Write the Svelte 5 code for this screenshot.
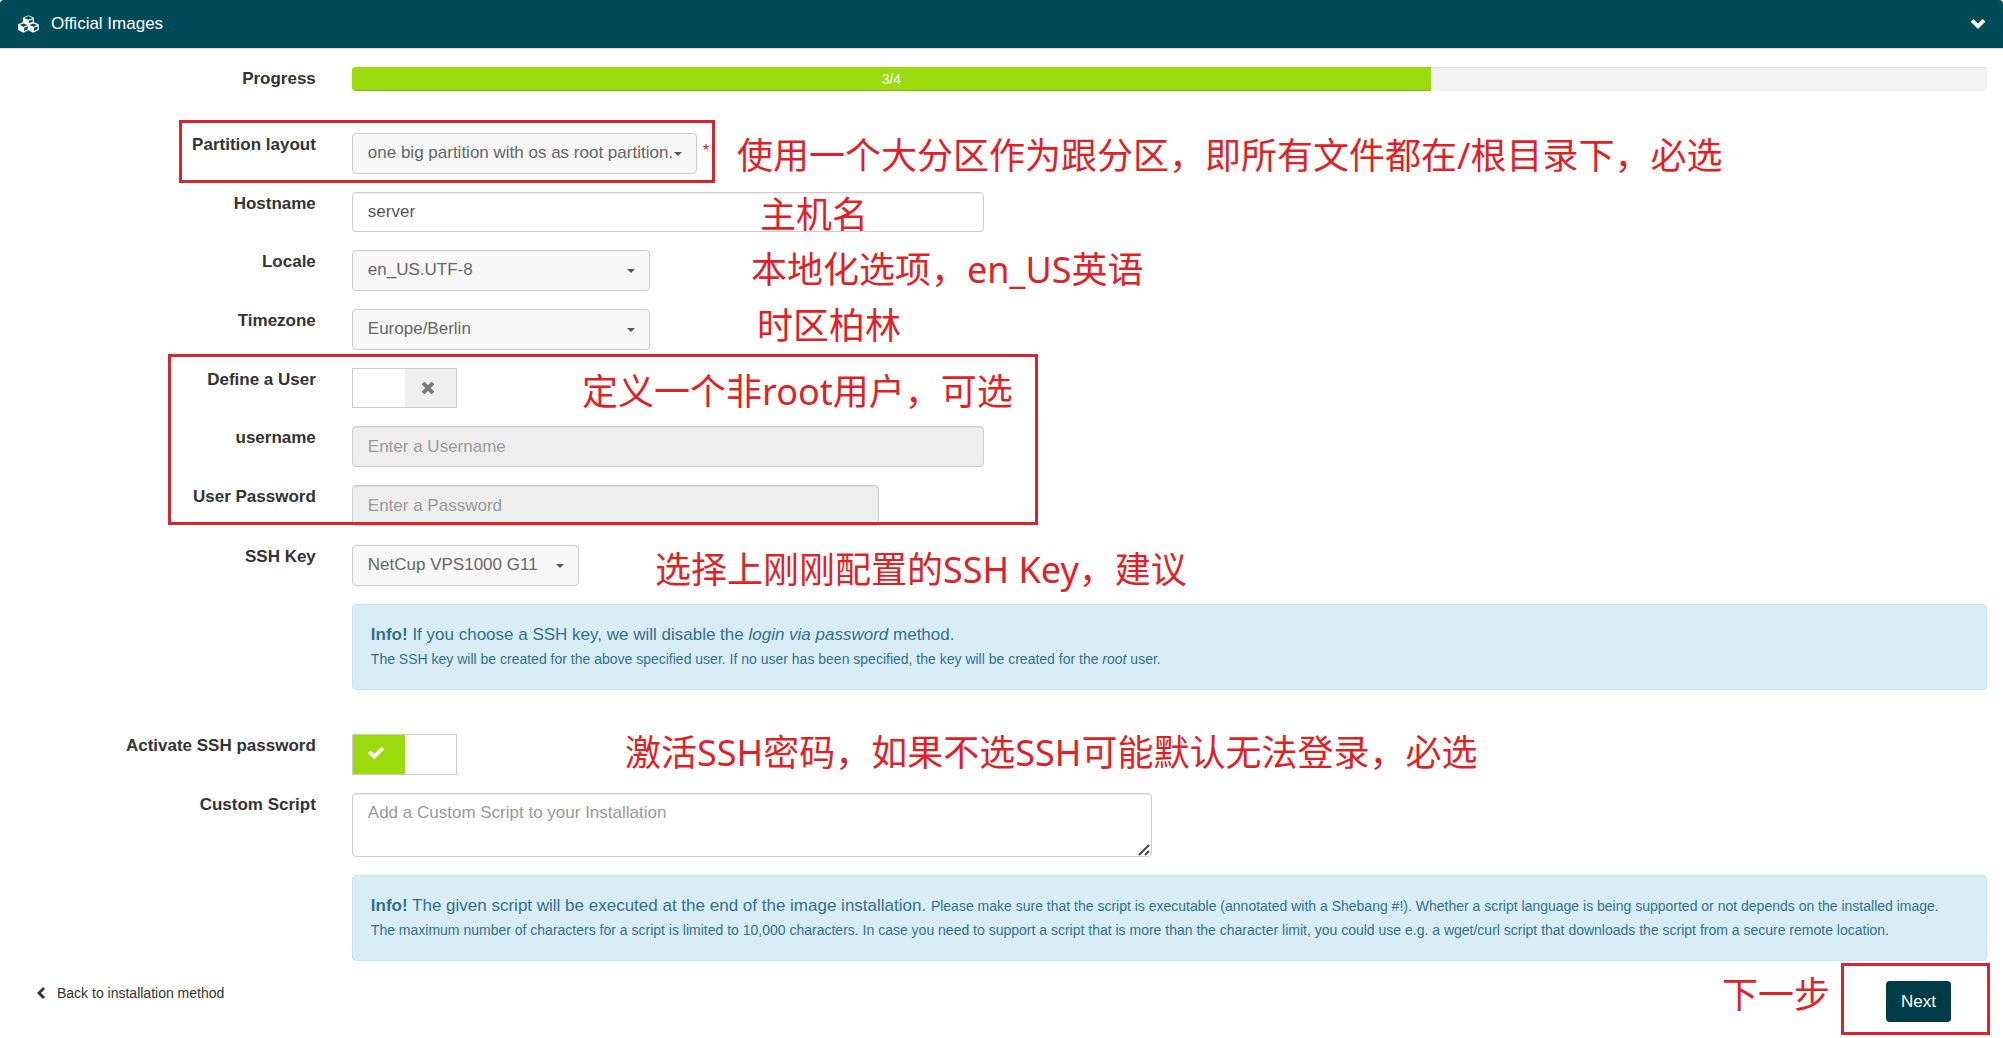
<script>
  let userDefined = $state(false);
  let sshPassword = $state(true);
  let hostname = $state('server');
  const step = 3;
  const steps = 4;
  const fill = 66;
</script>

{#snippet caret()}
  <svg class="caret" viewBox="0 0 8 4" aria-hidden="true"><path d="M0 0h8L4 4z" /></svg>
{/snippet}

{#snippet marks()}
  <svg class="on" viewBox="121 334 1550 1188" aria-hidden="true"><path d="M1671 566q0 40-28 68l-724 724-136 136q-28 28-68 28t-68-28l-136-136-362-362q-28-28-28-68t28-68l136-136q28-28 68-28t68 28l294 295 656-657q28-28 68-28t68 28l136 136q28 28 28 68z" /></svg>
  <svg class="off" viewBox="302 366 1188 1188" aria-hidden="true"><path d="M1490 1322q0 40-28 68l-136 136q-28 28-68 28t-68-28l-294-294-294 294q-28 28-68 28t-68-28l-136-136q-28-28-28-68t28-68l294-294-294-294q-28-28-28-68t28-68l136-136q28-28 68-28t68 28l294 294 294-294q28-28 68-28t68 28l136 136q28 28 28 68t-28 68l-294 294 294 294q28 28 28 68z" /></svg>
{/snippet}

<div class="page">
  <header>
    <svg class="cubes" viewBox="0 0 2304 1792" aria-hidden="true"><path d="M640 1632l384-192v-314l-384 164v342zM576 1178l404-173-404-173-404 173zM1664 1632l384-192v-314l-384 164v342zM1600 1178l404-173-404-173-404 173zM1152 823l384-165v-266l-384 164v267zM1088 446l441-189-441-189-441 189zM2176 1024v416q0 36-19 67t-52 47l-448 224q-25 14-57 14t-57-14l-448-224q-4-2-7-4-2 2-7 4l-448 224q-25 14-57 14t-57-14l-448-224q-33-16-52-47t-19-67v-416q0-38 21.500-70t56.500-48l434-186v-400q0-38 21.500-70t56.500-48l448-192q23-10 50-10t50 10l448 192q35 16 56.500 48t21.500 70v400l434 186q36 16 57 48t21 70z" /></svg>
    <h1>Official Images</h1>
    <button class="collapse" type="button" aria-label="Collapse">
      <svg viewBox="0 0 16 11" aria-hidden="true"><path d="M3 0L8 5L13 0L16 3L8 11L0 3z" /></svg>
    </button>
  </header>

  <form onsubmit={(e) => e.preventDefault()}>
    <div class="row progress-row">
      <span class="name" id="progress-label">Progress</span>
      <div class="field">
        <div class="progress" role="progressbar" aria-labelledby="progress-label" aria-valuemin="0" aria-valuemax={steps} aria-valuenow={step}>
          <div class="bar" style="width: {fill}%">{step}/{steps}</div>
        </div>
      </div>
    </div>

    <div class="row">
      <label class="name" for="layout">Partition layout</label>
      <div class="field">
        <span class="select wide">
          <select id="layout"><option>one big partition with os as root partition.</option></select>
          {@render caret()}
        </span>
        <span class="required">*</span>
      </div>
    </div>

    <div class="row">
      <label class="name" for="hostname">Hostname</label>
      <div class="field"><input class="text short" id="hostname" type="text" bind:value={hostname} /></div>
    </div>

    <div class="row">
      <label class="name" for="locale">Locale</label>
      <div class="field">
        <span class="select medium">
          <select id="locale"><option>en_US.UTF-8</option></select>
          {@render caret()}
        </span>
      </div>
    </div>

    <div class="row">
      <label class="name" for="timezone">Timezone</label>
      <div class="field">
        <span class="select medium">
          <select id="timezone"><option>Europe/Berlin</option></select>
          {@render caret()}
        </span>
      </div>
    </div>

    <div class="row">
      <label class="name" for="define">Define a User</label>
      <div class="field">
        <span class="switch short">
          <input id="define" type="checkbox" bind:checked={userDefined} />
          {@render marks()}
        </span>
      </div>
    </div>

    <div class="row">
      <label class="name" for="username">username</label>
      <div class="field"><input class="text" id="username" type="text" placeholder="Enter a Username" disabled={!userDefined} /></div>
    </div>

    <div class="row">
      <label class="name" for="password">User Password</label>
      <div class="field"><input class="text secret" id="password" type="password" placeholder="Enter a Password" disabled={!userDefined} /></div>
    </div>

    <div class="row">
      <label class="name" for="key">SSH Key</label>
      <div class="field">
        <span class="select small">
          <select id="key"><option>NetCup VPS1000 G11</option></select>
          {@render caret()}
        </span>
      </div>
    </div>

    <div class="row key-info">
      <div class="alert">
        <p><strong>Info!</strong> If you choose a SSH key, we will disable the <em>login via password</em> method.</p>
        <p><small>The SSH key will be created for the above specified user. If no user has been specified, the key will be created for the <em>root</em> user.</small></p>
      </div>
    </div>

    <div class="row">
      <label class="name" for="activate">Activate SSH password</label>
      <div class="field">
        <span class="switch">
          <input id="activate" type="checkbox" bind:checked={sshPassword} />
          {@render marks()}
        </span>
      </div>
    </div>

    <div class="row">
      <label class="name" for="script">Custom Script</label>
      <div class="field">
        <div class="area">
          <textarea id="script" placeholder="Add a Custom Script to your Installation"></textarea>
          <svg class="grip" viewBox="0 0 12 12" aria-hidden="true"><path d="M1 11L11 1M7 11L11 7" /></svg>
        </div>
      </div>
    </div>

    <div class="row">
      <div class="alert">
        <p><strong>Info!</strong> The given script will be executed at the end of the image installation. <small>Please make sure that the script is executable (annotated with a Shebang #!). Whether a script language is being supported or not depends on the installed image.</small></p>
        <p><small>The maximum number of characters for a script is limited to 10,000 characters. In case you need to support a script that is more than the character limit, you could use e.g. a wget/curl script that downloads the script from a secure remote location.</small></p>
      </div>
    </div>

    <footer>
      <a href="#method">
        <svg viewBox="0 0 8 12" aria-hidden="true"><path d="M6 0L8 2L4 6L8 10L6 12L0 6z" /></svg>
        Back to installation method
      </a>
      <button class="next" type="submit">Next</button>
    </footer>
  </form>

  <div class="box partition"></div>
  <div class="box user"></div>
  <div class="box forward"></div>
  <span class="note n-partition">使用一个大分区作为跟分区，即所有文件都在/根目录下，必选</span>
  <span class="note n-host">主机名</span>
  <span class="note n-locale">本地化选项，en_US英语</span>
  <span class="note n-zone">时区柏林</span>
  <span class="note n-user">定义一个非root用户，可选</span>
  <span class="note n-key">选择上刚刚配置的SSH Key，建议</span>
  <span class="note n-activate">激活SSH密码，如果不选SSH可能默认无法登录，必选</span>
  <span class="note n-next">下一步</span>
</div>

<style>
  :global(body) {
    background: #fff;
  }
  .page {
    position: relative;
    font-family: 'Liberation Sans', Arial, sans-serif;
    font-size: 17px;
    line-height: 24px;
    color: #333;
  }
  .page * {
    box-sizing: border-box;
  }
  header {
    display: flex;
    align-items: center;
    gap: 11px;
    height: 48px;
    padding: 0 17px 1px 18px;
    background: #004b5a;
    color: #fff;
    border-radius: 4px 4px 0 0;
    box-shadow: 0 1px 0 #d5dfe2;
  }
  .cubes {
    width: 22px;
    height: 18px;
    fill: currentColor;
  }
  h1 {
    margin: 0;
    flex: 1;
    font-size: 17px;
    font-weight: 400;
  }
  .collapse {
    display: flex;
    padding: 0;
    border: 0;
    background: none;
    color: #fff;
  }
  .collapse svg {
    width: 16px;
    height: 10px;
    fill: currentColor;
  }
  form {
    padding-top: 19px;
  }
  .row {
    display: flex;
    margin-bottom: 18px;
  }
  .progress-row {
    margin-bottom: 42px;
  }
  .name {
    width: 16.6667%;
    padding-right: 18px;
    text-align: right;
    font-weight: 700;
  }
  .field {
    flex: 1;
    display: flex;
    padding: 0 16px 0 18px;
  }
  .progress {
    flex: 1;
    height: 24px;
    border-radius: 4px;
    overflow: hidden;
    background: #f4f4f4;
    box-shadow: inset 0 1px 2px #0000001a;
  }
  .bar {
    height: 100%;
    background: #9bda0c;
    box-shadow: inset 0 -1px 0 #00000026;
    color: #fff;
    font-size: 14px;
    text-align: center;
  }
  .select {
    position: relative;
  }
  select,
  .text,
  textarea {
    width: 100%;
    height: 41px;
    padding: 0 15px;
    border: 1px solid #ccc;
    border-radius: 4px;
    font: inherit;
    color: #555;
    background: #fff;
    box-shadow: inset 0 1px 1px #00000013;
  }
  select {
    display: block;
    appearance: none;
    padding: 0 15px 1px;
    background: #f7f7f7;
    color: #666;
    box-shadow: none;
  }
  .wide {
    width: 345px;
  }
  .medium {
    width: 298px;
  }
  .small {
    width: 227px;
  }
  .caret {
    position: absolute;
    right: 15px;
    top: 19px;
    width: 8px;
    height: 4px;
    fill: #555;
    pointer-events: none;
  }
  .required {
    padding: 6px 0 0 6px;
    font-size: 17px;
    color: #d22;
  }
  .text {
    width: 632px;
  }
  .text.short {
    height: 40px;
  }
  .text.secret {
    width: 527px;
    margin-bottom: 1px;
  }
  .text:disabled {
    background: #eee;
  }
  ::placeholder {
    color: #999;
    opacity: 1;
  }
  .area {
    position: relative;
    width: 800px;
  }
  textarea {
    display: block;
    height: 64px;
    padding: 7px 15px;
    resize: none;
  }
  .grip {
    position: absolute;
    right: 2px;
    bottom: 1px;
    width: 12px;
    height: 12px;
    fill: none;
    stroke: #444;
    stroke-width: 2;
    pointer-events: none;
  }
  .switch {
    position: relative;
    width: 105px;
    height: 41px;
  }
  .switch.short {
    height: 40px;
  }
  .switch input {
    appearance: none;
    display: block;
    width: 100%;
    height: 100%;
    margin: 0;
    border: 1px solid #ccc;
    background: linear-gradient(90deg, #fff 52px, #eee 52px);
  }
  .switch input:checked {
    background: linear-gradient(90deg, #9bda0c 52px, #fff 52px);
  }
  .on,
  .off {
    position: absolute;
    pointer-events: none;
  }
  .on {
    display: none;
    left: 16px;
    top: 13px;
    width: 16px;
    height: 12px;
    fill: #fff;
  }
  .off {
    right: 23px;
    top: 14px;
    width: 12px;
    height: 12px;
    fill: #777;
  }
  input:checked ~ .on {
    display: block;
  }
  input:checked ~ .off {
    display: none;
  }
  .alert {
    flex: 1;
    margin: 0 16px 0 calc(16.6667% + 18px);
    padding: 18px;
    border: 1px solid #bce8f1;
    border-radius: 4px;
    background: #d9edf7;
    color: #31708f;
  }
  .alert p {
    margin: 0;
  }
  small {
    font-size: 14px;
  }
  .key-info {
    margin-bottom: 44px;
  }
  footer {
    display: flex;
    justify-content: space-between;
    align-items: flex-start;
    padding: 2px 52px 16px 37px;
  }
  footer a {
    display: flex;
    align-items: center;
    gap: 12px;
    color: #333;
    font-size: 14px;
    text-decoration: none;
  }
  footer a svg {
    width: 8px;
    height: 12px;
    fill: currentColor;
  }
  .next {
    width: 65px;
    height: 41px;
    padding: 0;
    border: 0;
    border-radius: 4px;
    background: #003c48;
    color: #fff;
    font: inherit;
  }
  .box {
    position: absolute;
    border: 3px solid #d8252d;
    pointer-events: none;
  }
  .box.partition {
    left: 179px;
    top: 120px;
    width: 536px;
    height: 63px;
  }
  .box.user {
    left: 168px;
    top: 354px;
    width: 870px;
    height: 171px;
  }
  .box.forward {
    right: 13px;
    top: 963px;
    width: 149px;
    height: 72px;
  }
  .note {
    position: absolute;
    font-family: 'Noto Sans', 'Noto Sans CJK SC', sans-serif;
    font-size: 36px;
    line-height: 48px;
    white-space: nowrap;
    color: #e11f26;
    pointer-events: none;
  }
  .n-partition {
    left: 737px;
    top: 132px;
  }
  .n-host {
    left: 760px;
    top: 191px;
  }
  .n-locale {
    left: 751px;
    top: 246px;
  }
  .n-zone {
    left: 757px;
    top: 302px;
  }
  .n-user {
    left: 582px;
    top: 368px;
  }
  .n-key {
    left: 655px;
    top: 546px;
  }
  .n-activate {
    left: 625px;
    top: 729px;
  }
  .n-next {
    right: 173px;
    top: 971px;
  }
</style>
